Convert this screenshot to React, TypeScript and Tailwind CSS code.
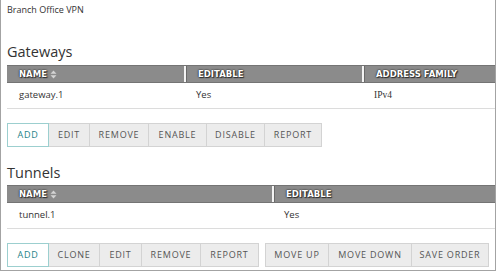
type Col = { label: string; width: string; sortable?: boolean };

function SortIcon() {
  return (
    <svg width="7" height="9" viewBox="0 0 7 9" className="ml-[3px]">
      <path d="M3.5 0.5 L6.5 3.8 L0.5 3.8 Z" fill="#d4d4d4" />
      <path d="M3.5 8.5 L6.5 5.2 L0.5 5.2 Z" fill="#d4d4d4" />
    </svg>
  );
}

function Table({ cols, row }: { cols: Col[]; row: { text: string; serif?: boolean }[] }) {
  return (
    <div>
      <div className="flex h-[18px] bg-[#8b8b8b] border-y border-[#747474]">
        {cols.map((c, i) => (
          <div
            key={c.label}
            className={`${c.width} flex items-center pl-[12px] text-[8.5px] font-bold text-white [text-shadow:0_0_1px_#222,0_0_2px_#222,1px_1px_1px_#333] ${i > 0 ? "border-l-2 border-l-[#f4f4f4] shadow-[inset_1px_0_0_#6a6a6a]" : ""}`}
            style={{ fontFamily: '"DejaVu Sans", Verdana, sans-serif' }}
          >
            {c.label}
            {c.sortable && <SortIcon />}
          </div>
        ))}
      </div>
      <div className="flex h-[26px] border-b border-[#dcdcdc]">
        {row.map((r, i) => (
          <div
            key={i}
            className={`${cols[i].width} flex items-center pl-[12px] text-[9.5px] text-[#333]`}
            style={{ fontFamily: r.serif ? '"Liberation Serif", serif' : '"Open Sans", sans-serif' }}
          >
            {r.text}
          </div>
        ))}
      </div>
    </div>
  );
}

function Btn({ label, w, primary }: { label: string; w: string; primary?: boolean }) {
  return (
    <div
      className={`${w} h-[24px] -ml-px first:ml-0 flex items-center justify-center border text-[9px] tracking-[0.8px] ${
        primary
          ? "relative z-10 bg-white border-[#9ccfcf] text-[#1f8389]"
          : "bg-[#ececec] border-[#d3d3d3] text-[#555]"
      }`}
    >
      {label}
    </div>
  );
}

export default function App() {
  return (
    <div
      className="w-[496px] h-[271px] overflow-hidden border-x border-b border-[#a3a3a3] bg-white pl-[6px]"
      style={{ fontFamily: '"Open Sans", sans-serif' }}
    >
      <div className="pt-[4px] h-[42px] text-[9px] leading-[12px] text-[#333]">Branch Office VPN</div>

      <div className="h-[20px] text-[14.5px] leading-[20px] text-[#333] mb-[3px]">Gateways</div>
      <Table
        cols={[
          { label: "NAME", width: "w-[177px]", sortable: true },
          { label: "EDITABLE", width: "w-[178px]" },
          { label: "ADDRESS FAMILY", width: "flex-1" },
        ]}
        row={[{ text: "gateway.1" }, { text: "Yes" }, { text: "IPv4", serif: true }]}
      />
      <div className="flex mt-[14px]">
        <Btn label="ADD" w="w-[42px]" primary />
        <Btn label="EDIT" w="w-[42px]" />
        <Btn label="REMOVE" w="w-[60px]" />
        <Btn label="ENABLE" w="w-[59px]" />
        <Btn label="DISABLE" w="w-[59px]" />
        <Btn label="REPORT" w="w-[58px]" />
      </div>

      <div className="mt-[16px] h-[20px] text-[14.5px] leading-[20px] text-[#333] mb-[2px]">Tunnels</div>
      <Table
        cols={[
          { label: "NAME", width: "w-[265px]", sortable: true },
          { label: "EDITABLE", width: "flex-1" },
        ]}
        row={[{ text: "tunnel.1" }, { text: "Yes" }]}
      />
      <div className="flex mt-[14px]">
        <Btn label="ADD" w="w-[42px]" primary />
        <Btn label="CLONE" w="w-[52px]" />
        <Btn label="EDIT" w="w-[43px]" />
        <Btn label="REMOVE" w="w-[60px]" />
        <Btn label="REPORT" w="w-[59px]" />
        <div className="w-[7px]" />
        <Btn label="MOVE UP" w="w-[64px]" />
        <Btn label="MOVE DOWN" w="w-[84px]" />
        <Btn label="SAVE ORDER" w="w-[78px]" />
      </div>
    </div>
  );
}
